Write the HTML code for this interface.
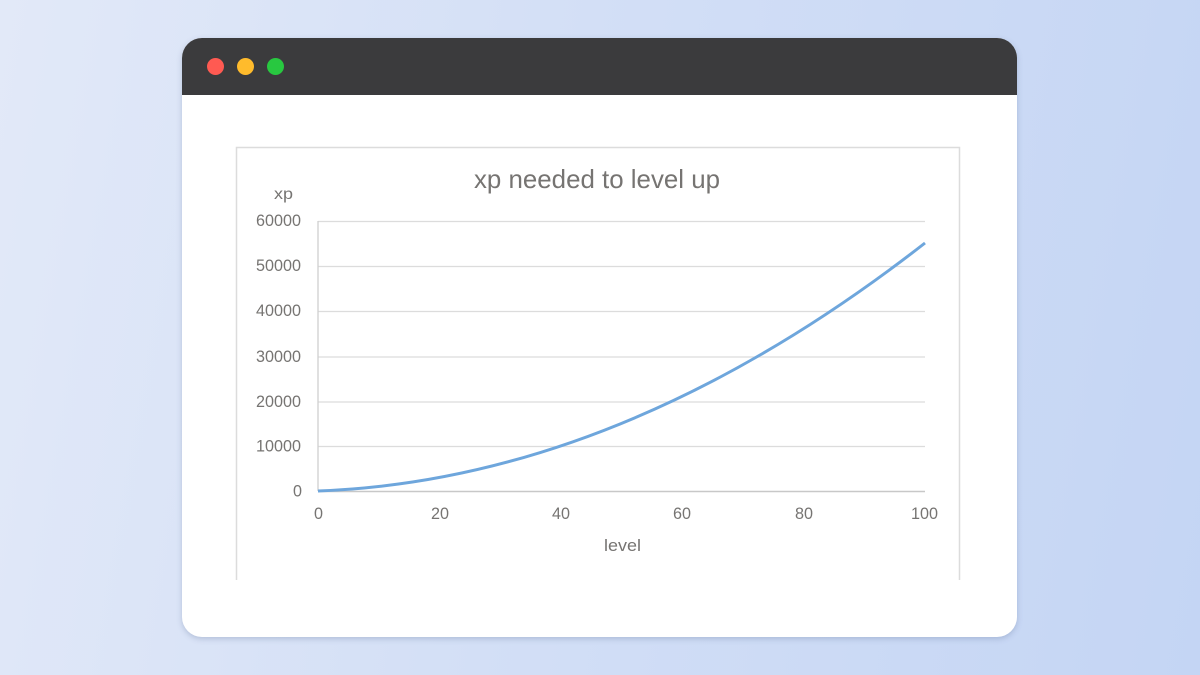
<!DOCTYPE html>
<html>
<head>
<meta charset="utf-8">
<style>
html,body{margin:0;padding:0;width:1200px;height:675px;overflow:hidden}
body{background:linear-gradient(100deg,#e2e9f8 0%,#d3dff6 45%,#c4d5f4 100%);position:relative;font-family:"Liberation Sans",sans-serif}
.win{position:absolute;left:182px;top:38px;width:835px;height:599px;background:#fff;border-radius:20px;box-shadow:0 2px 6px rgba(90,110,150,.3);overflow:hidden}
.bar{position:absolute;left:0;top:0;width:835px;height:57px;background:#3b3b3d}
.dot{position:absolute;top:20px;width:17px;height:17px;border-radius:50%}
svg{position:absolute;left:0;top:0}
text{font-family:"Liberation Sans",sans-serif;fill:#767472;filter:blur(.25px)}
</style>
</head>
<body>
<div class="win">
  <div class="bar">
    <div class="dot" style="left:25px;background:#ff5a52"></div>
    <div class="dot" style="left:55px;background:#ffbb2c"></div>
    <div class="dot" style="left:85px;background:#28c840"></div>
  </div>
</div>
<svg width="1200" height="675" viewBox="0 0 1200 675">
  <path d="M236.5 580V147.500H959.500V580" fill="none" stroke="#dcdcdc" stroke-width="1.500"/>
  <g stroke="#dcdcdc" stroke-width="1.300" fill="none">
    <path d="M318 221.500H925"/>
    <path d="M318 266.500H925"/>
    <path d="M318 311.500H925"/>
    <path d="M318 357H925"/>
    <path d="M318 402H925"/>
    <path d="M318 446.500H925"/>
  </g>
  <path d="M318 221V491" stroke="#cfcfcf" stroke-width="1.300" fill="none"/>
  <path d="M318 491.500H925" stroke="#c8c8c8" stroke-width="1.500" fill="none"/>
  <path d="M318 491Q621.500 479.750 925 243" stroke="#6ea6dc" stroke-width="3" fill="none"/>
  <text x="474" y="188" font-size="26" textLength="246" lengthAdjust="spacingAndGlyphs">xp needed to level up</text>
  <text x="274" y="199" font-size="16" textLength="19" lengthAdjust="spacingAndGlyphs">xp</text>
  <g font-size="17">
    <text x="256" y="226" textLength="45" lengthAdjust="spacingAndGlyphs">60000</text>
    <text x="256" y="271" textLength="45" lengthAdjust="spacingAndGlyphs">50000</text>
    <text x="256" y="316" textLength="45" lengthAdjust="spacingAndGlyphs">40000</text>
    <text x="256" y="362" textLength="45" lengthAdjust="spacingAndGlyphs">30000</text>
    <text x="256" y="407" textLength="45" lengthAdjust="spacingAndGlyphs">20000</text>
    <text x="256" y="451.500" textLength="45" lengthAdjust="spacingAndGlyphs">10000</text>
    <text x="293" y="496.500" textLength="9" lengthAdjust="spacingAndGlyphs">0</text>
    <text x="314" y="519" textLength="9" lengthAdjust="spacingAndGlyphs">0</text>
    <text x="431" y="519" textLength="18" lengthAdjust="spacingAndGlyphs">20</text>
    <text x="552" y="519" textLength="18" lengthAdjust="spacingAndGlyphs">40</text>
    <text x="673" y="519" textLength="18" lengthAdjust="spacingAndGlyphs">60</text>
    <text x="795" y="519" textLength="18" lengthAdjust="spacingAndGlyphs">80</text>
    <text x="911" y="519" textLength="27" lengthAdjust="spacingAndGlyphs">100</text>
    <text x="604" y="551" textLength="37" lengthAdjust="spacingAndGlyphs">level</text>
  </g>
</svg>
</body>
</html>
